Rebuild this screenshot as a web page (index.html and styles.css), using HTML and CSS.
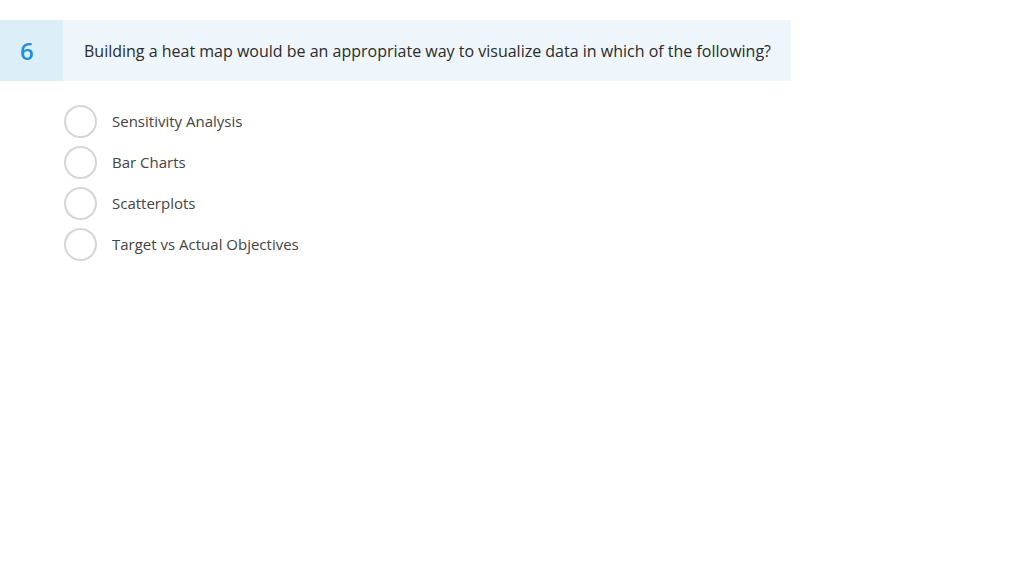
FILE: index.html
```html
<!DOCTYPE html>
<html>
<head>
<meta charset="utf-8">
<link rel="stylesheet" href="styles.css">
</head>
<body>
<div class="question">
  <div class="q-head">
    <div class="q-num">6</div>
    <div class="q-text">Building a heat map would be an appropriate way to visualize data in which of the following?</div>
  </div>
  <ul class="options">
    <li class="option"><span class="radio"></span><span class="label">Sensitivity Analysis</span></li>
    <li class="option"><span class="radio"></span><span class="label">Bar Charts</span></li>
    <li class="option"><span class="radio"></span><span class="label">Scatterplots</span></li>
    <li class="option"><span class="radio"></span><span class="label">Target vs Actual Objectives</span></li>
  </ul>
</div>
</body>
</html>
```
FILE: styles.css
```css
html, body {
  margin: 0;
  padding: 0;
  background: #ffffff;
  font-family: "Open Sans", "Noto Sans", sans-serif;
}
.question {
  padding-top: 20px;
  width: 791px;
}
.q-head {
  display: flex;
  height: 61px;
  background: #eef6fc;
}
.q-num {
  width: 63px;
  flex: none;
  background: #dceff9;
  color: #1e8fd5;
  font-size: 24px;
  font-weight: 600;
  display: flex;
  align-items: center;
  padding-left: 20px;
  padding-bottom: 1px;
  box-sizing: border-box;
}
.q-text {
  display: flex;
  align-items: center;
  padding-left: 21px;
  padding-top: 1px;
  font-size: 16px;
  color: #2b2b2b;
}
.options {
  list-style: none;
  margin: 0;
  padding: 24px 0 0 64px;
  display: flex;
  flex-direction: column;
  gap: 8px;
}
.option {
  display: flex;
  align-items: center;
  height: 33px;
}
.radio {
  width: 33px;
  height: 33px;
  box-sizing: border-box;
  border: 2px solid #d6d6d6;
  border-radius: 50%;
  flex: none;
}
.label {
  margin-left: 15px;
  font-size: 15px;
  color: #444444;
  padding-bottom: 1px;
}
```
